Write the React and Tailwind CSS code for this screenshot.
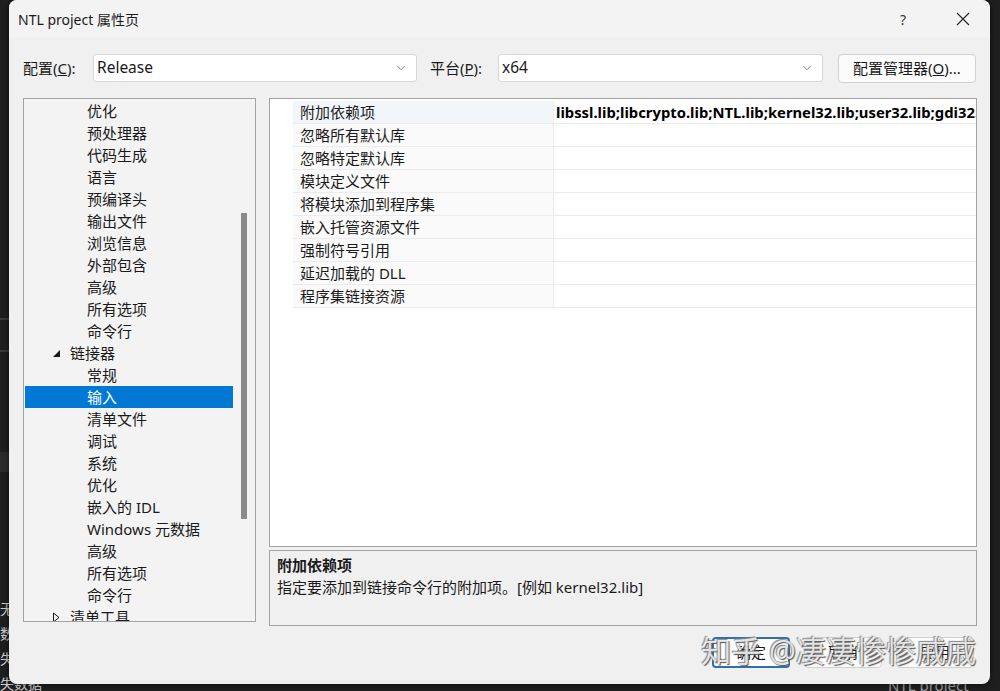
import { ChevronDown } from 'lucide-react';

const treeItems = [
  { t: '优化', l: 2 },
  { t: '预处理器', l: 2 },
  { t: '代码生成', l: 2 },
  { t: '语言', l: 2 },
  { t: '预编译头', l: 2 },
  { t: '输出文件', l: 2 },
  { t: '浏览信息', l: 2 },
  { t: '外部包含', l: 2 },
  { t: '高级', l: 2 },
  { t: '所有选项', l: 2 },
  { t: '命令行', l: 2 },
  { t: '链接器', l: 1, open: true },
  { t: '常规', l: 2 },
  { t: '输入', l: 2, sel: true },
  { t: '清单文件', l: 2 },
  { t: '调试', l: 2 },
  { t: '系统', l: 2 },
  { t: '优化', l: 2 },
  { t: '嵌入的 IDL', l: 2 },
  { t: 'Windows 元数据', l: 2 },
  { t: '高级', l: 2 },
  { t: '所有选项', l: 2 },
  { t: '命令行', l: 2 },
  { t: '清单工具', l: 1, closed: true },
];

const props = [
  '附加依赖项',
  '忽略所有默认库',
  '忽略特定默认库',
  '模块定义文件',
  '将模块添加到程序集',
  '嵌入托管资源文件',
  '强制符号引用',
  '延迟加载的 DLL',
  '程序集链接资源',
];

function TreeRow({ item }) {
  return (
    <div
      className={`h-[22px] flex items-center shrink-0 ${item.sel ? 'bg-[#0078d4] text-white' : 'text-[#1a1a1a]'} ${item.l === 2 ? 'pl-[62px]' : 'pl-[27px]'}`}
    >
      {item.open && (
        <svg width="9" height="9" viewBox="0 0 9 9" className="mr-[9px]">
          <path d="M8 1 L8 8 L1 8 Z" fill="#1a1a1a" />
        </svg>
      )}
      {item.closed && (
        <svg width="9" height="11" viewBox="0 0 9 11" className="mr-[9px]">
          <path d="M1.5 1 L7 5.5 L1.5 10 Z" fill="none" stroke="#1a1a1a" strokeWidth="1" />
        </svg>
      )}
      <span className="leading-[22px]">{item.t}</span>
    </div>
  );
}

function Combo({ value, width }) {
  return (
    <div className={`${width} h-[28px] bg-white border border-[#d6d6d6] rounded-[3px] flex items-center justify-between pl-[3px] pr-[8px]`}>
      <span className="text-[15.5px] text-[#1a1a1a] leading-none">{value}</span>
      <ChevronDown size={14} strokeWidth={1.2} className="text-[#555]" />
    </div>
  );
}

export default function App() {
  return (
    <div className="relative w-[1000px] h-[691px] bg-[#1f1f1f] overflow-hidden font-['Noto_Sans','Noto_Sans_CJK_SC',sans-serif] text-[15px]">
      {/* editor bits behind the dialog */}
      <div className="absolute left-0 top-[318px] w-[9px] h-[2px] bg-[#3a3a3a]" />
      <div className="absolute left-0 top-[350px] w-[9px] h-[2px] bg-[#3a3a3a]" />
      <div className="absolute left-0 top-[452px] w-[9px] h-[20px] bg-[#2c2c2c]" />
      <div className="absolute left-0 top-[596px] flex flex-col text-[14px] leading-[25px] text-[#cfcfcf]">
        <span>无</span>
        <span>数</span>
        <span>失</span>
        <span>失数据</span>
      </div>
      <div className="absolute left-[888px] top-[674px] text-[15px] text-[#9a9a9a]">NTL project</div>

      <div className="relative ml-[9px] w-[981px] h-[684px] bg-[#f0f0f0] rounded-[8px] flex flex-col shadow-[0_0_6px_rgba(0,0,0,0.6)]">
        {/* title bar */}
        <div className="h-[38px] flex items-center pl-[9px] pr-[20px] bg-[#f3f3f3] rounded-t-[8px]">
          <span className="text-[14px] text-[#1a1a1a]">NTL project 属性页</span>
          <span className="ml-auto text-[14px] text-[#333] mr-[50px]">?</span>
          <svg width="14" height="14" viewBox="0 0 14 14">
            <path d="M1 1 L13 13 M13 1 L1 13" stroke="#222" strokeWidth="1.1" />
          </svg>
        </div>

        {/* config row */}
        <div className="mt-[16px] h-[28px] flex items-center pl-[14px] text-[#1a1a1a]">
          <span className="w-[70px]">配置(<span className="underline">C</span>):</span>
          <Combo value="Release" width="w-[324px]" />
          <span className="ml-[13px] w-[68px]">平台(<span className="underline">P</span>):</span>
          <Combo value="x64" width="w-[325px]" />
          <div className="ml-[15px] w-[138px] h-[29px] bg-[#fbfbfb] border border-[#d0d0d0] rounded-[4px] flex items-center justify-center">
            配置管理器(<span className="underline">O</span>)...
          </div>
        </div>

        {/* main area */}
        <div className="mt-[16px] flex pl-[14px] gap-[13px]">
          {/* tree */}
          <div className="w-[233px] h-[524px] border border-[#a3a3a3] bg-[#f3f3f3] flex overflow-hidden">
            <div className="w-[208px] ml-[1px] pt-[1px] flex flex-col">
              {treeItems.map((it, i) => (
                <TreeRow key={i} item={it} />
              ))}
            </div>
            <div className="ml-auto w-[22px] flex justify-center">
              <div className="mt-[114px] w-[6px] h-[306px] bg-[#8a8a8a]" />
            </div>
          </div>

          {/* right side */}
          <div className="w-[708px] flex flex-col gap-[3px]">
            <div className="h-[449px] border border-[#a3a3a3] bg-white pt-[2px] overflow-hidden">
              {props.map((p, i) => (
                <div key={i} className="flex h-[23px]">
                  <div className="w-[23px] shrink-0 bg-white" />
                  <div className={`w-[261px] shrink-0 border-b border-r border-[#ebebeb] pl-[7px] flex items-center ${i === 0 ? 'bg-[#f2f5fa]' : 'bg-[#fafafa]'}`}>
                    <span className="text-[#1a1a1a] leading-[22px]">{p}</span>
                  </div>
                  <div className="flex-1 min-w-0 border-b border-[#ebebeb] pl-[2px] flex items-center overflow-hidden whitespace-nowrap">
                    {i === 0 && (
                      <span className="font-bold text-[14.8px] text-black leading-[22px]">
                        libssl.lib;libcrypto.lib;NTL.lib;kernel32.lib;user32.lib;gdi32.lib;winspool.lib
                      </span>
                    )}
                  </div>
                </div>
              ))}
            </div>
            <div className="h-[76px] border border-[#a3a3a3] bg-[#f0f0f0] pl-[7px] pt-[3px] text-[#1a1a1a]">
              <div className="font-bold leading-[22px]">附加依赖项</div>
              <div className="leading-[23px]">指定要添加到链接命令行的附加项。[例如 kernel32.lib]</div>
            </div>
          </div>
        </div>

        {/* buttons */}
        <div className="relative mt-[11px] h-[31px] flex justify-end gap-[14px] pr-[16px] text-[#1a1a1a]">
          <div className="w-[78px] h-[31px] bg-white border-2 border-[#2e6fb0] rounded-[4px] flex items-center justify-center">确定</div>
          <div className="w-[78px] h-[31px] bg-[#fbfbfb] border border-[#d0d0d0] rounded-[4px] flex items-center justify-center">取消</div>
          <div className="w-[78px] h-[31px] bg-[#fbfbfb] border border-[#d0d0d0] rounded-[4px] flex items-center justify-center">应用</div>
          {/* watermark */}
          <div className="absolute right-[14px] top-[-4px] text-[30px] leading-[36px] text-white/80 whitespace-nowrap [text-shadow:1px_1px_1px_#555,-1px_-1px_1px_#888] pointer-events-none">
            知乎 @凄凄惨惨戚戚
          </div>
        </div>
      </div>
    </div>
  );
}
